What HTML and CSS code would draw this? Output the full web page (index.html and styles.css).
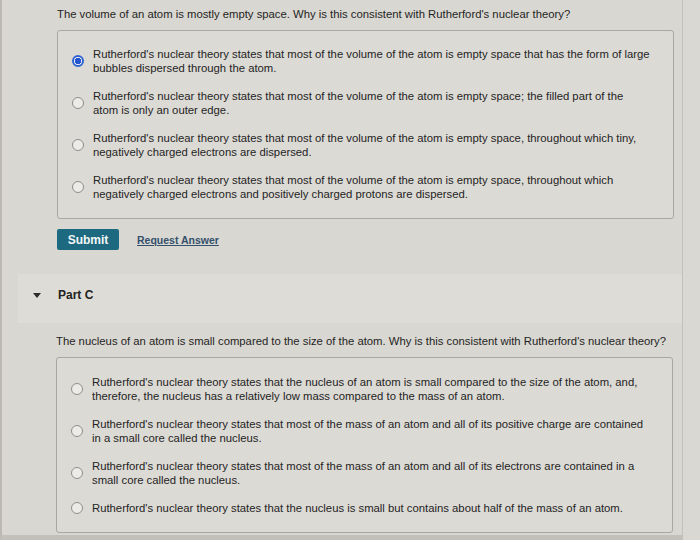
FILE: index.html
```html
<!DOCTYPE html>
<html lang="en">
<head>
<meta charset="utf-8">
<title>Rutherford's nuclear theory</title>
<link rel="stylesheet" href="styles.css">
</head>
<body>
<div class="page">
  <section class="part part-b">
    <p class="question">The volume of an atom is mostly empty space. Why is this consistent with Rutherford's nuclear theory?</p>
    <div class="choices">
      <label class="choice"><span class="radio checked"></span><span class="text">Rutherford's nuclear theory states that most of the volume of the atom is empty space that has the form of large<br>bubbles dispersed through the atom.</span></label>
      <label class="choice"><span class="radio"></span><span class="text">Rutherford's nuclear theory states that most of the volume of the atom is empty space; the filled part of the<br>atom is only an outer edge.</span></label>
      <label class="choice"><span class="radio"></span><span class="text">Rutherford's nuclear theory states that most of the volume of the atom is empty space, throughout which tiny,<br>negatively charged electrons are dispersed.</span></label>
      <label class="choice"><span class="radio"></span><span class="text">Rutherford's nuclear theory states that most of the volume of the atom is empty space, throughout which<br>negatively charged electrons and positively charged protons are dispersed.</span></label>
    </div>
    <div class="actions">
      <button class="submit" type="button">Submit</button>
      <a class="request" href="#">Request Answer</a>
    </div>
  </section>

  <div class="part-header">
    <span class="caret"></span>
    <span class="part-title">Part C</span>
  </div>

  <section class="part part-c">
    <p class="question">The nucleus of an atom is small compared to the size of the atom. Why is this consistent with Rutherford's nuclear theory?</p>
    <div class="choices">
      <label class="choice"><span class="radio"></span><span class="text">Rutherford's nuclear theory states that the nucleus of an atom is small compared to the size of the atom, and,<br>therefore, the nucleus has a relatively low mass compared to the mass of an atom.</span></label>
      <label class="choice"><span class="radio"></span><span class="text">Rutherford's nuclear theory states that most of the mass of an atom and all of its positive charge are contained<br>in a small core called the nucleus.</span></label>
      <label class="choice"><span class="radio"></span><span class="text">Rutherford's nuclear theory states that most of the mass of an atom and all of its electrons are contained in a<br>small core called the nucleus.</span></label>
      <label class="choice"><span class="radio"></span><span class="text">Rutherford's nuclear theory states that the nucleus is small but contains about half of the mass of an atom.</span></label>
    </div>
  </section>
</div>
</body>
</html>
```

FILE: styles.css
```css
html, body {
  margin: 0;
  padding: 0;
}

body {
  background: #dad8d2;
  font-family: "Liberation Sans", Arial, sans-serif;
  color: #222;
  width: 700px;
  height: 540px;
  overflow: hidden;
}

.page {
  width: 683px;
  height: 540px;
  background: #d9d7d1;
  border-left: 2px solid #bcb9b2;
  border-right: 1px solid #c3c1bb;
  border-bottom: 5px solid #c2c0ba;
  box-sizing: border-box;
}

.part {
  padding-left: 55px;
}

.part-b {
  padding-top: 7px;
}

.question {
  margin: 0;
  font-size: 11.3px;
  line-height: 14px;
  color: #1f1f1f;
}

.choices {
  margin-top: 9px;
  width: 617px;
  box-sizing: border-box;
  border: 1px solid #a9a7a2;
  border-radius: 3px;
  background: #dcdad5;
  padding: 9px 0 10px;
}

.choice {
  display: flex;
  align-items: center;
  padding: 7px 0 7px 14px;
}

.radio {
  flex: none;
  width: 12px;
  height: 12px;
  box-sizing: border-box;
  border-radius: 50%;
  border: 1px solid #8f8e8b;
  background: #ecebe8;
  margin-right: 9px;
}

.radio.checked {
  border: 2px solid #2f62d4;
  background: radial-gradient(circle, #2456cf 0 3px, #f4f4f2 3.5px);
}

.text {
  font-size: 11.3px;
  line-height: 14px;
  color: #242424;
}

.actions {
  display: flex;
  align-items: center;
  gap: 18px;
  margin-top: 10px;
}

.submit {
  font-family: inherit;
  font-size: 12px;
  font-weight: bold;
  color: #f2f6f7;
  background: #1d6a80;
  border: none;
  border-radius: 2px;
  height: 21px;
  width: 62px;
  padding: 0;
}

.request {
  font-size: 10.5px;
  font-weight: bold;
  color: #34506c;
  text-decoration: underline;
}

.part-header {
  margin: 24px 0 0 16px;
  height: 49px;
  background: #dedcd7;
  display: flex;
  align-items: flex-start;
  padding-left: 15px;
  padding-top: 14px;
  box-sizing: border-box;
}

.caret {
  width: 0;
  height: 0;
  border-left: 4px solid transparent;
  border-right: 4px solid transparent;
  border-top: 5px solid #2b2b2b;
  margin: 5px 17px 0 0;
}

.part-title {
  font-size: 12px;
  line-height: 14px;
  font-weight: bold;
  color: #222;
}

.part-c {
  padding-left: 54px;
}

.part-c .question {
  margin-top: 11px;
}

.part-c .choices {
  margin-top: 9px;
  padding: 10px 0 10px;
}
```
